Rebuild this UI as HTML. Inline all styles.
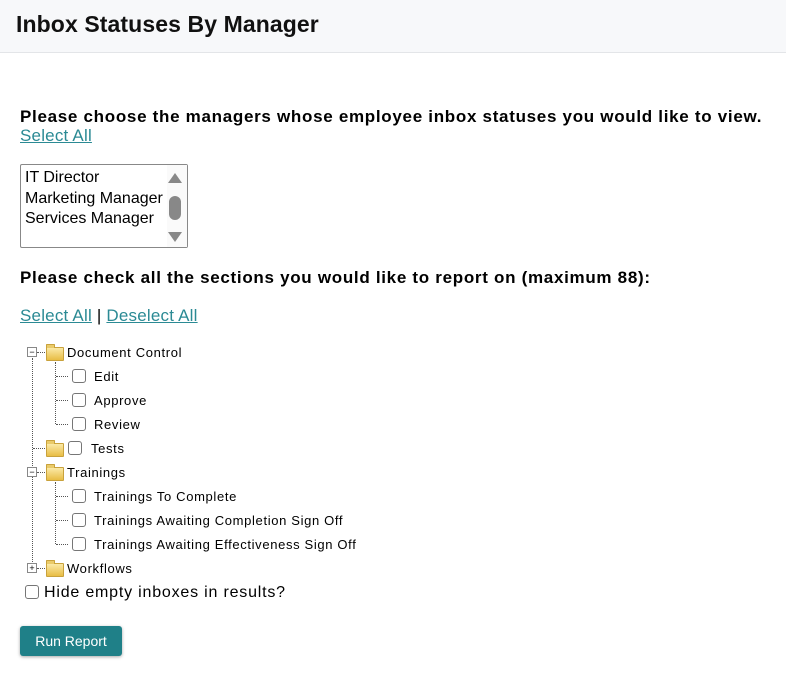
<!DOCTYPE html>
<html><head><style>
body{margin:0;width:786px;height:681px;background:#fff;font-family:"Liberation Sans",sans-serif;position:relative;overflow:hidden;color:#000}
.a{position:absolute;white-space:nowrap}
.hdr{position:absolute;left:0;top:0;width:786px;height:52px;background:#f7f8fa;border-bottom:1px solid #e3e5e8}
.lnk{color:#2b8a94;text-decoration:underline}
.cb{position:absolute;width:12px;height:12px;border:1px solid #767676;border-radius:3px;background:#fff}
.t{position:absolute;font-size:13px;color:#000;letter-spacing:.65px;white-space:nowrap}
.fold{position:absolute;width:16px;height:12px;background:linear-gradient(#fbe9a6,#e8bd45);border:1px solid #c9a23c;border-radius:1px}
.fold:before{content:"";position:absolute;left:-1px;top:-4px;width:7px;height:3px;background:#eacb6a;border:1px solid #c9a23c;border-bottom:none;border-radius:1px 1px 0 0}
.pm{position:absolute;width:8px;height:8px;border:1px solid #888;background:#fff;font-size:9px;line-height:8px;text-align:center}
.vd{position:absolute;border-left:1px dotted #555;width:0}
.hd{position:absolute;border-top:1px dotted #555;height:0}
</style></head><body>
<div class="hdr"></div>
<div class="a" style="left:16px;top:11px;font-size:23px;font-weight:bold;color:#111;letter-spacing:.1px">Inbox Statuses By Manager</div>
<div class="a" style="left:20px;top:107px;font-size:17px;font-weight:bold;letter-spacing:.7px">Please choose the managers whose employee inbox statuses you would like to view.</div>
<div class="a lnk" style="left:20px;top:126px;font-size:17px;letter-spacing:.2px">Select All</div>
<div style="position:absolute;left:20px;top:164px;width:166px;height:82px;border:1px solid #888;border-radius:2px;background:#fff">
<div class="a" style="left:4px;top:3px;font-size:16px;line-height:20.5px">IT Director<br>Marketing Manager<br>Services Manager</div>
<div style="position:absolute;right:0;top:0;width:20px;height:82px;background:#fafafa"></div>
<div style="position:absolute;left:147px;top:8px;width:0;height:0;border-left:7px solid transparent;border-right:7px solid transparent;border-bottom:10px solid #888"></div>
<div style="position:absolute;left:148px;top:31px;width:12px;height:24px;background:#888;border-radius:6px"></div>
<div style="position:absolute;left:147px;top:67px;width:0;height:0;border-left:7px solid transparent;border-right:7px solid transparent;border-top:10px solid #888"></div>
</div>
<div class="a" style="left:20px;top:268px;font-size:17px;font-weight:bold;letter-spacing:.7px">Please check all the sections you would like to report on (maximum 88):</div>
<div class="a" style="left:20px;top:306px;font-size:17px;letter-spacing:.2px"><span class="lnk">Select All</span> | <span class="lnk">Deselect All</span></div>

<div class="vd" style="left:32px;top:358px;height:210px"></div>
<div class="vd" style="left:55px;top:362px;height:62px"></div>
<div class="vd" style="left:55px;top:482px;height:62px"></div>
<div class="hd" style="left:56px;top:376px;width:12px"></div>
<div class="hd" style="left:56px;top:400px;width:12px"></div>
<div class="hd" style="left:56px;top:424px;width:12px"></div>
<div class="hd" style="left:33px;top:448px;width:12px"></div>
<div class="hd" style="left:56px;top:496px;width:12px"></div>
<div class="hd" style="left:56px;top:520px;width:12px"></div>
<div class="hd" style="left:56px;top:544px;width:12px"></div>
<div class="hd" style="left:37px;top:352px;width:8px"></div>
<div class="hd" style="left:37px;top:472px;width:8px"></div>
<div class="hd" style="left:37px;top:568px;width:8px"></div>

<div class="pm" style="left:27px;top:347px">−</div>
<div class="fold" style="left:46px;top:347px"></div><div class="t" style="left:67px;top:345px">Document Control</div>
<div class="cb" style="left:72px;top:369px"></div><div class="t" style="left:94px;top:369px">Edit</div>
<div class="cb" style="left:72px;top:393px"></div><div class="t" style="left:94px;top:393px">Approve</div>
<div class="cb" style="left:72px;top:417px"></div><div class="t" style="left:94px;top:417px">Review</div>
<div class="fold" style="left:46px;top:443px"></div><div class="cb" style="left:68px;top:441px"></div><div class="t" style="left:91px;top:441px">Tests</div>
<div class="pm" style="left:27px;top:467px">−</div>
<div class="fold" style="left:46px;top:467px"></div><div class="t" style="left:67px;top:465px">Trainings</div>
<div class="cb" style="left:72px;top:489px"></div><div class="t" style="left:94px;top:489px">Trainings To Complete</div>
<div class="cb" style="left:72px;top:513px"></div><div class="t" style="left:94px;top:513px">Trainings Awaiting Completion Sign Off</div>
<div class="cb" style="left:72px;top:537px"></div><div class="t" style="left:94px;top:537px">Trainings Awaiting Effectiveness Sign Off</div>
<div class="pm" style="left:27px;top:563px">+</div>
<div class="fold" style="left:46px;top:563px"></div><div class="t" style="left:67px;top:561px">Workflows</div>

<div class="cb" style="left:25px;top:585px"></div>
<div class="a" style="left:44px;top:584px;font-size:16px;letter-spacing:.8px">Hide empty inboxes in results?</div>
<div style="position:absolute;left:20px;top:626px;width:102px;height:30px;background:#1f8088;border-radius:3px;box-shadow:0 1px 3px rgba(0,0,0,.35);color:#fff;font-size:14px;line-height:30px;text-align:center">Run Report</div>
</body></html>
